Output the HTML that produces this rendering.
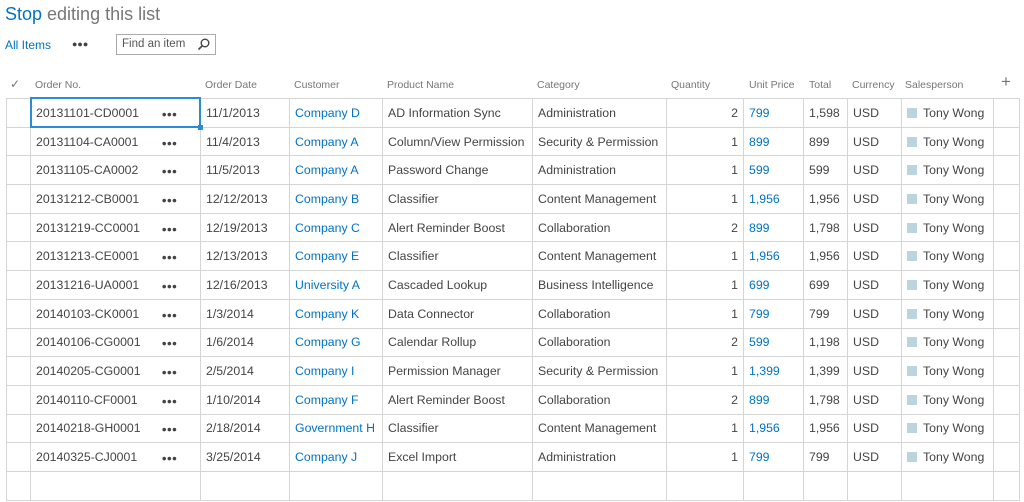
<!DOCTYPE html>
<html><head><style>
body{margin:0;width:1024px;height:502px;overflow:hidden;background:#fff;font-family:"Liberation Sans",sans-serif;color:#444;position:relative}
.t{position:absolute;left:5px;top:4px;font-size:18px;color:#777}
.t b{font-weight:normal;color:#0072c6}
.ai{position:absolute;left:5px;top:38px;font-size:12px;color:#0072c6}
.dots{position:absolute;left:72px;top:39px;font-size:9px;color:#444}
.srch{position:absolute;left:116px;top:34px;width:100px;height:21px;border:1px solid #ababab;font-size:11.5px;color:#555;box-sizing:border-box}
.srch span{position:absolute;left:5px;top:3px}
.hd{position:absolute;top:79px;font-size:10.5px;color:#777}
table{position:absolute;left:6px;top:98px;border-collapse:collapse;table-layout:fixed;font-size:12.3px}
td{border:1px solid #d5d5d5;height:27.7px;padding:0 5px;white-space:nowrap;overflow:hidden;vertical-align:middle;color:#444}
td.b{color:#0072c6}
.r{text-align:right}
.e{color:#444;font-size:8.5px;float:right;margin-right:18px;margin-top:3px}
.sq{display:inline-block;width:10px;height:10px;background:#bcd4de;margin-right:6px;vertical-align:-1px}
.sel{position:absolute;left:30px;top:97px;width:171px;height:31px;border:2px solid #2a8dd4;box-sizing:border-box}
.sel:after{content:"";position:absolute;right:-4px;bottom:-4px;width:5px;height:5px;background:#2a8dd4}
</style></head><body>
<div class="t"><b>Stop</b> editing this list</div>
<div class="ai">All Items</div>
<div class="dots">●●●</div>
<div class="srch"><span>Find an item</span>
<svg style="position:absolute;right:5px;top:3px" width="13" height="13" viewBox="0 0 13 13"><circle cx="8" cy="5" r="3.8" fill="none" stroke="#444" stroke-width="1.4"/><line x1="5.3" y1="7.7" x2="1.5" y2="11.5" stroke="#444" stroke-width="1.6"/></svg></div>
<div class="hd" style="left:10px;top:77px;font-size:12px">✓</div>
<div class="hd" style="left:35px">Order No.</div>
<div class="hd" style="left:205px">Order Date</div>
<div class="hd" style="left:294px">Customer</div>
<div class="hd" style="left:387px">Product Name</div>
<div class="hd" style="left:537px">Category</div>
<div class="hd" style="left:671px">Quantity</div>
<div class="hd" style="left:749px">Unit Price</div>
<div class="hd" style="left:809px">Total</div>
<div class="hd" style="left:852px">Currency</div>
<div class="hd" style="left:905px">Salesperson</div>
<div class="hd" style="left:1001px;top:72px;font-size:17px">+</div>
<table>
<colgroup><col style="width:24px"><col style="width:170px"><col style="width:89px"><col style="width:93px"><col style="width:150px"><col style="width:134px"><col style="width:77px"><col style="width:60px"><col style="width:44px"><col style="width:54px"><col style="width:92px"><col style="width:26px"></colgroup>
<tr><td></td><td>20131101-CD0001<span class="e">●●●</span></td><td>11/1/2013</td><td class="b">Company D</td><td>AD Information Sync</td><td>Administration</td><td class="r">2</td><td class="b">799</td><td>1,598</td><td>USD</td><td><span class="sq"></span>Tony Wong</td><td></td></tr>
<tr><td></td><td>20131104-CA0001<span class="e">●●●</span></td><td>11/4/2013</td><td class="b">Company A</td><td>Column/View Permission</td><td>Security &amp; Permission</td><td class="r">1</td><td class="b">899</td><td>899</td><td>USD</td><td><span class="sq"></span>Tony Wong</td><td></td></tr>
<tr><td></td><td>20131105-CA0002<span class="e">●●●</span></td><td>11/5/2013</td><td class="b">Company A</td><td>Password Change</td><td>Administration</td><td class="r">1</td><td class="b">599</td><td>599</td><td>USD</td><td><span class="sq"></span>Tony Wong</td><td></td></tr>
<tr><td></td><td>20131212-CB0001<span class="e">●●●</span></td><td>12/12/2013</td><td class="b">Company B</td><td>Classifier</td><td>Content Management</td><td class="r">1</td><td class="b">1,956</td><td>1,956</td><td>USD</td><td><span class="sq"></span>Tony Wong</td><td></td></tr>
<tr><td></td><td>20131219-CC0001<span class="e">●●●</span></td><td>12/19/2013</td><td class="b">Company C</td><td>Alert Reminder Boost</td><td>Collaboration</td><td class="r">2</td><td class="b">899</td><td>1,798</td><td>USD</td><td><span class="sq"></span>Tony Wong</td><td></td></tr>
<tr><td></td><td>20131213-CE0001<span class="e">●●●</span></td><td>12/13/2013</td><td class="b">Company E</td><td>Classifier</td><td>Content Management</td><td class="r">1</td><td class="b">1,956</td><td>1,956</td><td>USD</td><td><span class="sq"></span>Tony Wong</td><td></td></tr>
<tr><td></td><td>20131216-UA0001<span class="e">●●●</span></td><td>12/16/2013</td><td class="b">University A</td><td>Cascaded Lookup</td><td>Business Intelligence</td><td class="r">1</td><td class="b">699</td><td>699</td><td>USD</td><td><span class="sq"></span>Tony Wong</td><td></td></tr>
<tr><td></td><td>20140103-CK0001<span class="e">●●●</span></td><td>1/3/2014</td><td class="b">Company K</td><td>Data Connector</td><td>Collaboration</td><td class="r">1</td><td class="b">799</td><td>799</td><td>USD</td><td><span class="sq"></span>Tony Wong</td><td></td></tr>
<tr><td></td><td>20140106-CG0001<span class="e">●●●</span></td><td>1/6/2014</td><td class="b">Company G</td><td>Calendar Rollup</td><td>Collaboration</td><td class="r">2</td><td class="b">599</td><td>1,198</td><td>USD</td><td><span class="sq"></span>Tony Wong</td><td></td></tr>
<tr><td></td><td>20140205-CG0001<span class="e">●●●</span></td><td>2/5/2014</td><td class="b">Company I</td><td>Permission Manager</td><td>Security &amp; Permission</td><td class="r">1</td><td class="b">1,399</td><td>1,399</td><td>USD</td><td><span class="sq"></span>Tony Wong</td><td></td></tr>
<tr><td></td><td>20140110-CF0001<span class="e">●●●</span></td><td>1/10/2014</td><td class="b">Company F</td><td>Alert Reminder Boost</td><td>Collaboration</td><td class="r">2</td><td class="b">899</td><td>1,798</td><td>USD</td><td><span class="sq"></span>Tony Wong</td><td></td></tr>
<tr><td></td><td>20140218-GH0001<span class="e">●●●</span></td><td>2/18/2014</td><td class="b">Government H</td><td>Classifier</td><td>Content Management</td><td class="r">1</td><td class="b">1,956</td><td>1,956</td><td>USD</td><td><span class="sq"></span>Tony Wong</td><td></td></tr>
<tr><td></td><td>20140325-CJ0001<span class="e">●●●</span></td><td>3/25/2014</td><td class="b">Company J</td><td>Excel Import</td><td>Administration</td><td class="r">1</td><td class="b">799</td><td>799</td><td>USD</td><td><span class="sq"></span>Tony Wong</td><td></td></tr>
<tr><td></td><td></td><td></td><td></td><td></td><td></td><td></td><td></td><td></td><td></td><td></td><td></td></tr>
</table>
<div class="sel"></div>
</body></html>
